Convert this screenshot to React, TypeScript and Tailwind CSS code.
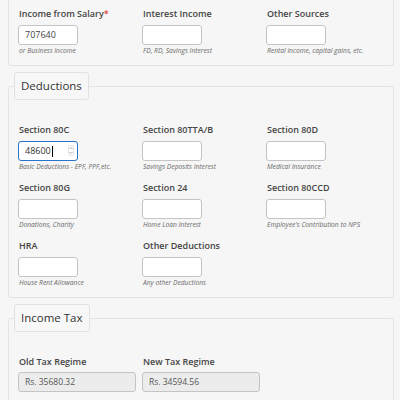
import React from "react";

type Field = { label: string; hint: string; value?: string; required?: boolean; focused?: boolean };

function Input({ value, focused }: { value?: string; focused?: boolean }) {
  if (focused) {
    return (
      <div className="relative flex h-[20px] w-[60px] items-center rounded-[3px] border-[1.5px] border-[#2a74cc] bg-white pl-[6px] text-[9px] text-[#333]">
        <span>{value}</span>
        <span className="ml-[1px] h-[11px] w-px bg-black" />
        <svg className="absolute right-[3px] top-[3px]" width="6" height="11" viewBox="0 0 6 11">
          <rect x="0.5" y="0.5" width="5" height="10" rx="1.5" fill="none" stroke="#d4d4d4" strokeWidth="0.6" />
          <path d="M1.5 4 L3 2.5 L4.5 4" fill="none" stroke="#9a9a9a" strokeWidth="0.8" />
          <path d="M1.5 7 L3 8.5 L4.5 7" fill="none" stroke="#9a9a9a" strokeWidth="0.8" />
        </svg>
      </div>
    );
  }
  return (
    <div className="flex h-[20px] w-[60px] items-center rounded-[3px] border border-[#c4c4c4] bg-white pl-[6px] text-[9px] text-[#444]">
      {value}
    </div>
  );
}

function FieldCell({ f }: { f: Field }) {
  return (
    <div className="flex w-[124px] flex-col">
      <div className="h-[16px] pl-px text-[9px] leading-4 font-semibold text-[#454545]">
        {f.label}
        {f.required && <span className="text-[#e04444]">*</span>}
      </div>
      <div className="mt-[3px]">
        <Input value={f.value} focused={f.focused} />
      </div>
      <div className="h-[12px] pl-px text-[6.7px] leading-3 italic text-[#6a6a6a]">{f.hint}</div>
    </div>
  );
}

function Legend({ children }: { children: React.ReactNode }) {
  return (
    <legend className="-ml-px h-[28px] rounded-[3px] border border-[#e2e2e2] bg-[#f7f7f7] px-[6px] text-[11.5px] leading-[26px] text-[#333]">
      {children}
    </legend>
  );
}

const income: Field[] = [
  { label: "Income from Salary", hint: "or Business Income", value: "707640", required: true },
  { label: "Interest Income", hint: "FD, RD, Savings Interest" },
  { label: "Other Sources", hint: "Rental income, capital gains, etc." },
];

const deductions: Field[][] = [
  [
    { label: "Section 80C", hint: "Basic Deductions - EPF, PPF,etc.", value: "48600", focused: true },
    { label: "Section 80TTA/B", hint: "Savings Deposits Interest" },
    { label: "Section 80D", hint: "Medical Insurance" },
  ],
  [
    { label: "Section 80G", hint: "Donations, Charity" },
    { label: "Section 24", hint: "Home Loan Interest" },
    { label: "Section 80CCD", hint: "Employee's Contribution to NPS" },
  ],
  [
    { label: "HRA", hint: "House Rent Allowance" },
    { label: "Other Deductions", hint: "Any other Deductions" },
  ],
];

export default function App() {
  return (
    <div
      className="min-h-screen bg-[#f6f6f6] pl-[8px]"
      style={{ fontFamily: "'Open Sans', 'Noto Sans', sans-serif" }}
    >
      <div className="w-[386px] rounded-b-[3px] border-x border-b border-[#e4e4e4] pt-[6px] pb-[8px] pl-[9px]">
        <div className="flex">
          {income.map((f) => (
            <FieldCell key={f.label} f={f} />
          ))}
        </div>
      </div>

      <fieldset className="mt-[6px] w-[386px] rounded-[3px] border border-[#e4e4e4] pt-[22px] pb-[8px] pl-[6px]">
        <Legend>Deductions</Legend>
        <div className="flex flex-col gap-[7px] pl-[3px]">
          {deductions.map((row, i) => (
            <div key={i} className="flex">
              {row.map((f) => (
                <FieldCell key={f.label} f={f} />
              ))}
            </div>
          ))}
        </div>
      </fieldset>

      <fieldset className="mt-[6px] w-[386px] rounded-[3px] border border-[#e4e4e4] pt-[22px] pb-[10px] pl-[6px]">
        <Legend>Income Tax</Legend>
        <div className="flex pl-[3px]">
          {[
            ["Old Tax Regime", "Rs. 35680.32"],
            ["New Tax Regime", "Rs. 34594.56"],
          ].map(([l, v]) => (
            <div key={l} className="flex w-[124px] flex-col">
              <div className="h-[16px] pl-px text-[9px] leading-4 font-semibold text-[#454545]">{l}</div>
              <div className="mt-[2px] flex h-[20px] w-[118px] items-center rounded-[3px] border border-[#c4c4c4] bg-[#ececec] pl-[6px] text-[8.5px] text-[#555]">
                {v}
              </div>
            </div>
          ))}
        </div>
      </fieldset>
    </div>
  );
}
